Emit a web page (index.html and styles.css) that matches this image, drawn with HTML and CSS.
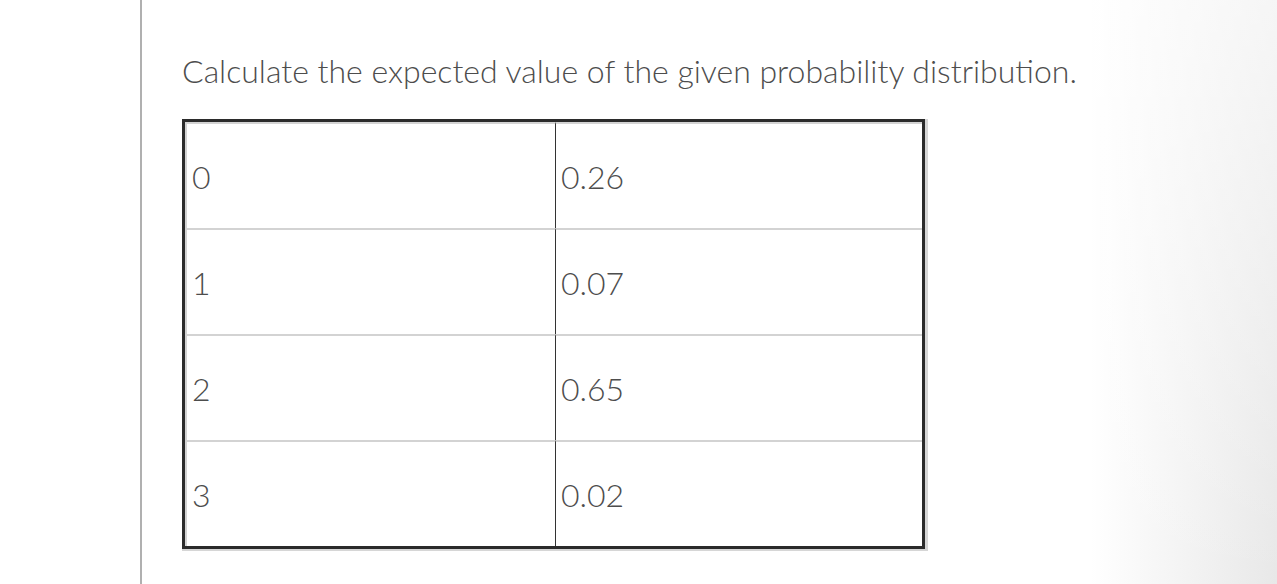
FILE: index.html
```html
<!DOCTYPE html>
<html>
<head>
<meta charset="utf-8">
<link rel="stylesheet" href="styles.css">
</head>
<body>
<div class="page">
  <div class="content">
    <p class="question">Calculate the expected value of the given probability distribution.</p>
    <div class="table-shadow">
      <table class="dist">
        <tr><td class="c1">0</td><td class="c2">0.26</td></tr>
        <tr><td class="c1">1</td><td class="c2">0.07</td></tr>
        <tr><td class="c1">2</td><td class="c2">0.65</td></tr>
        <tr><td class="c1">3</td><td class="c2">0.02</td></tr>
      </table>
    </div>
  </div>
</div>
</body>
</html>
```

FILE: styles.css
```css
html, body {
  margin: 0;
  padding: 0;
  height: 100%;
}
body {
  font-family: "Lato Light", Lato, "Liberation Sans", sans-serif;
  color: #444;
  background:
    linear-gradient(to right, rgba(232,232,232,0) 0, rgba(232,232,232,0) 1090px, rgba(232,232,232,1) 1277px),
    #fff;
}
.page {
  height: 584px;
  overflow: hidden;
  padding-left: 140px;
  background: linear-gradient(to bottom, rgba(255,255,255,0.6) 0, rgba(255,255,255,0) 100%);
}
.content {
  height: 100%;
  border-left: 2px solid #b0b0b0;
  padding-left: 40px;
  padding-top: 1px;
}
.question {
  font-size: 32px;
  font-weight: 300;
  margin: 52px 0 30px 0;
  line-height: 36px;
  color: #4d4d4d;
}
.table-shadow {
  display: inline-block;
  border-right: 3px solid #d6d6d6;
  border-bottom: 2px solid #d6d6d6;
}
.dist {
  border: 3px solid #2b2b2b;
  border-collapse: separate;
  border-spacing: 0;
}
.dist td {
  height: 104px;
  padding: 0 0 0 5px;
  border-top: 2px solid #d3d3d3;
  font-size: 32px;
  font-weight: 300;
  color: #4d4d4d;
  vertical-align: middle;
  box-sizing: content-box;
}
.dist .c1 {
  width: 363px;
  border-left: 2px solid #d3d3d3;
  border-right: 1px solid #333;
}
.dist .c2 {
  width: 361px;
}
```
